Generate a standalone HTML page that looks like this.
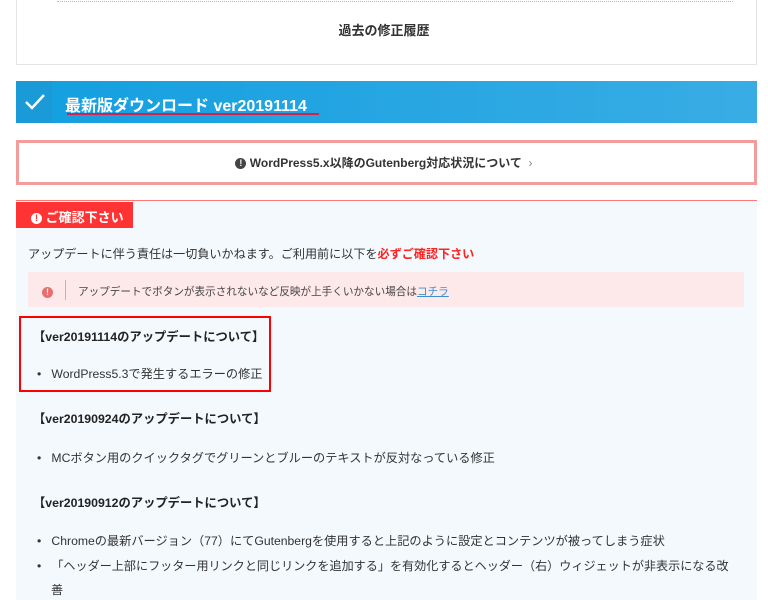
<!DOCTYPE html>
<html><head><meta charset="utf-8"><style>
*{margin:0;padding:0;box-sizing:border-box}
body{width:768px;height:596px;overflow:hidden;background:#fff;font-family:"Liberation Sans","Noto Sans CJK JP",sans-serif;color:#333;position:relative;font-size:13px}
.a{position:absolute;white-space:nowrap}
.ic{display:inline-block;width:11px;height:11px;border-radius:50%;text-align:center;font-size:9px;line-height:11px;font-weight:bold;vertical-align:1px}
</style></head><body>
<div class="a" style="left:16px;top:-2px;width:741px;height:67px;border:1px solid #e4e4e4;border-top:none"></div>
<div class="a" style="left:57px;top:1px;width:676px;border-top:1px dotted #bbb"></div>
<div class="a" style="left:0;width:768px;top:20px;text-align:center;font-weight:bold;font-size:13px;color:#333">過去の修正履歴</div>

<div class="a" style="left:16px;top:81px;width:741px;height:42px;background:linear-gradient(90deg,#139fe0,#39ace4)"></div>
<div class="a" style="left:16px;top:81px;width:36px;height:42px;background:#1a9ad6"></div>
<svg class="a" style="left:24px;top:93px" width="22" height="18" viewBox="0 0 22 18"><path d="M2 9 L8 15 L20 2" fill="none" stroke="#fff" stroke-width="2.5"/></svg>
<div class="a" style="left:65px;top:92px;color:#fff;font-weight:bold;font-size:16px">最新版ダウンロード ver20191114</div>
<div class="a" style="left:67px;top:113px;width:252px;height:2px;background:#d6224a"></div>

<div class="a" style="left:16px;top:140px;width:741px;height:45px;border:3px solid #f29c9c;background:#fff"></div>
<div class="a" style="left:0;width:768px;top:154px;text-align:center;font-size:12px;font-weight:bold;color:#333"><span class="ic" style="background:#444;color:#fff">!</span> WordPress5.x以降のGutenberg対応状況について <span style="font-weight:normal;color:#888">&nbsp;›</span></div>

<div class="a" style="left:16px;top:200px;width:741px;height:400px;background:#f3f9fd;border-top:1px solid #f77"></div>
<div class="a" style="left:16px;top:202px;width:117px;height:26px;background:#f33;color:#fff;font-weight:bold;font-size:13px;padding:5px 0 0 15px"><span class="ic" style="background:#fff;color:#f33">!</span> ご確認下さい</div>
<div class="a" style="left:28px;top:245px;font-size:12.1px;color:#333">アップデートに伴う責任は一切負いかねます。ご利用前に以下を<b style="color:#f22">必ずご確認下さい</b></div>
<div class="a" style="left:28px;top:272px;width:716px;height:35px;background:#fde8ea"></div>
<div class="a" style="left:42px;top:284px"><span class="ic" style="background:#e86e6e;color:#fde8ea">!</span></div>
<div class="a" style="left:65px;top:280px;width:1px;height:20px;background:#f0a0a0"></div>
<div class="a" style="left:78px;top:284px;font-size:10.6px;color:#444">アップデートでボタンが表示されないなど反映が上手くいかない場合は<span style="color:#3a8fd0;text-decoration:underline">コチラ</span></div>

<div class="a" style="left:19px;top:316px;width:252px;height:76px;border:2px solid #f00"></div>
<div class="a" style="left:33px;top:327px;font-weight:bold;font-size:12.3px;color:#222">【ver20191114のアップデートについて】</div>
<div class="a" style="left:37px;top:364px;font-size:12.2px;color:#333">•&nbsp;&nbsp; WordPress5.3で発生するエラーの修正</div>
<div class="a" style="left:33px;top:409px;font-weight:bold;font-size:12.3px;color:#222">【ver20190924のアップデートについて】</div>
<div class="a" style="left:37px;top:448px;font-size:12.2px;color:#333">•&nbsp;&nbsp; MCボタン用のクイックタグでグリーンとブルーのテキストが反対なっている修正</div>
<div class="a" style="left:33px;top:493px;font-weight:bold;font-size:12.3px;color:#222">【ver20190912のアップデートについて】</div>
<div class="a" style="left:37px;top:531px;font-size:12.2px;color:#333">•&nbsp;&nbsp; Chromeの最新バージョン（77）にてGutenbergを使用すると上記のように設定とコンテンツが被ってしまう症状</div>
<div class="a" style="left:37px;top:557px;font-size:12.1px;color:#333">•&nbsp;&nbsp; 「ヘッダー上部にフッター用リンクと同じリンクを追加する」を有効化するとヘッダー（右）ウィジェットが非表示になる改</div>
<div class="a" style="left:51px;top:580px;font-size:12.2px;color:#333">善</div>
</body></html>
